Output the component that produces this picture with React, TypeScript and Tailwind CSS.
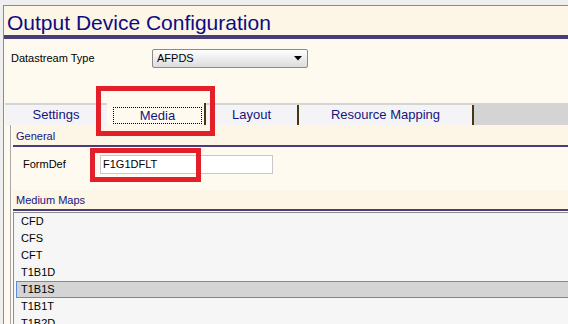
import React from "react";

const mediumMaps = ["CFD", "CFS", "CFT", "T1B1D", "T1B1S", "T1B1T", "T1B2D"];

const tabs = [
  { label: "Settings", width: "w-[102px]" },
  { label: "Media", width: "w-[99px]", active: true },
  { label: "Layout", width: "w-[93px]" },
  { label: "Resource Mapping", width: "w-[175px]" },
];

export default function App() {
  return (
    <div
      className="relative w-[568px] h-[324px] overflow-hidden bg-[#efefef] pt-[5px] pl-[3px]"
      style={{ fontFamily: '"Liberation Sans", Arial, sans-serif' }}
    >
      <div className="h-full border-t border-l border-[#8c8c8c] bg-[#fffaf0]">
        {/* title */}
        <div className="h-[29px] bg-[#fdf5e6] pl-[3px] pt-[5px] text-[21px] leading-[24px] text-[#0c0c82]">
          Output Device Configuration
        </div>
        <div className="h-[4px] bg-[#483d78]" />

        {/* datastream type */}
        <div className="mt-[10px] flex items-center pl-[7px]">
          <div className="w-[141px] text-[11px] text-black">Datastream Type</div>
          <div className="flex h-[19px] w-[156px] items-center justify-between rounded-[2px] border border-[#8a8a8a] bg-gradient-to-b from-white to-[#dcdcdc] pl-[4px] pr-[5px] text-[11px] text-black">
            <span>AFPDS</span>
            <svg width="8" height="5" viewBox="0 0 8 5">
              <path d="M0 0 H8 L4 4.5 Z" fill="#000" />
            </svg>
          </div>
        </div>

        {/* tabs */}
        <div className="mt-[35px] ml-[1px] flex h-[22px] items-end bg-[#d4d4d4]">
          {tabs.map((t) =>
            t.active ? (
              <div
                key={t.label}
                className={`${t.width} flex h-[22px] items-end self-stretch bg-[#fffaf0] border-r-2 border-[#4a3510]`}
              >
                <div className="mb-[1px] ml-[6px] mr-[2px] flex h-[17px] flex-1 items-center justify-center border border-dotted border-black text-[13px] text-[#14147e]">
                  {t.label}
                </div>
              </div>
            ) : (
              <div
                key={t.label}
                className={`${t.width} flex h-[20px] items-center justify-center bg-[#f4f4f7] text-[13px] text-[#14147e] ${
                  t.label === "Settings" ? "" : "border-r-2 border-[#4a3510]"
                }`}
              >
                {t.label}
              </div>
            )
          )}
        </div>

        {/* tab content */}
        <div className="ml-[6px] h-[200px] border-l border-[#a8a8a8] pl-[2px]">
          <div className="flex h-[20px] items-end bg-[#fdf5e6] pb-[1px] pl-[3px] text-[11px] text-[#14147e]">
            General
          </div>
          <div className="h-[2px] bg-[#483d78]" />

          <div className="mt-[8px] flex items-center pl-[10px]">
            <div className="w-[77px] text-[11px] text-black">FormDef</div>
            <div className="flex h-[19px] w-[173px] items-center border border-[#c8c8c8] bg-white pl-[2px] text-[11px] text-black">
              F1G1DFLT
            </div>
          </div>

          <div className="mt-[16px] flex h-[19px] items-end bg-[#fdf5e6] pb-[1px] pl-[3px] text-[11px] text-[#14147e]">
            Medium Maps
          </div>
          <div className="h-[2px] bg-[#483d78]" />
          <div className="h-[1px] bg-[#fffaf0]" />
          <div className="border-t border-l border-[#8c8c8c] bg-[#f6f6f6]">
            {mediumMaps.map((m) =>
              m === "T1B1S" ? (
                <div
                  key={m}
                  className="ml-[2px] flex h-[17px] items-center border-y border-l border-[#5b8ed8] bg-[#d4d4d4] pl-[4px] text-[11px] text-black"
                >
                  {m}
                </div>
              ) : (
                <div key={m} className="flex h-[17px] items-center pl-[7px] text-[11px] text-black">
                  {m}
                </div>
              )
            )}
          </div>
        </div>
      </div>

      {/* annotation boxes */}
      <div className="absolute left-[96px] top-[86px] h-[50px] w-[119px] border-[5px] border-[#e3202a]" />
      <div className="absolute left-[90px] top-[148px] h-[34px] w-[111px] border-[5px] border-[#e3202a]" />
    </div>
  );
}
